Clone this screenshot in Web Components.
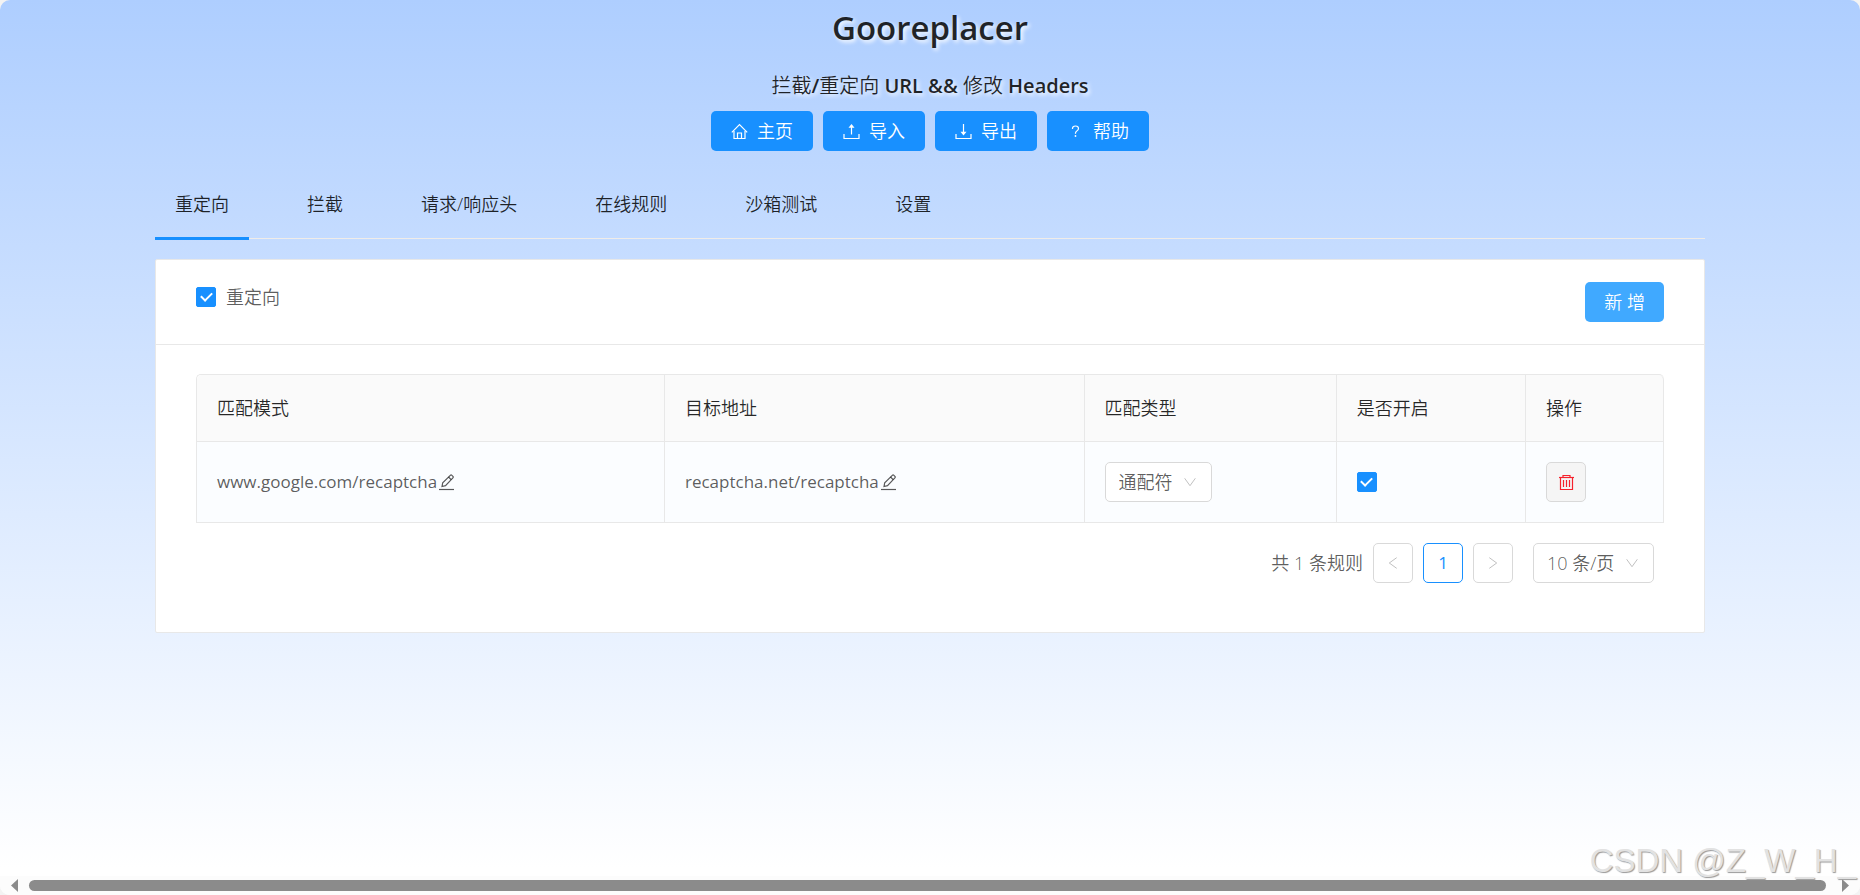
<!DOCTYPE html>
<html lang="zh-CN">
<head>
<meta charset="UTF-8">
<meta name="viewport" content="width=device-width, initial-scale=1">
<title>Gooreplacer</title>
<style>
  :root {
    --primary: #1890ff;
    --primary-hover: #40a9ff;
    --line: #e8e8e8;
    --control-line: #d9d9d9;
    --heading: rgba(0, 0, 0, 0.85);
    --text: rgba(0, 0, 0, 0.65);
  }
  html { background: #f3f3f3; }
  body {
    margin: 0;
    font: 350 17px/26px "Open Sans", "Noto Sans CJK SC", sans-serif;
    color: var(--text);
  }
  b { font-weight: 600; }
</style>
</head>
<body>
<app-shell>
  <app-header heading="Gooreplacer">
    <span slot="subheading">拦截<b>/</b>重定向 <b>URL &amp;&amp;</b> 修改 <b>Headers</b></span>
    <action-button icon="home">主页</action-button>
    <action-button icon="upload">导入</action-button>
    <action-button icon="download">导出</action-button>
    <action-button icon="question">帮助</action-button>
  </app-header>
  <tab-bar tabs="重定向,拦截,请求/响应头,在线规则,沙箱测试,设置" active="0"></tab-bar>
  <rule-card>
    <check-box slot="title" label="重定向"></check-box>
    <action-button slot="extra" class="light">新 增</action-button>
    <rule-table></rule-table>
    <page-nav></page-nav>
  </rule-card>
  <water-mark slot="overlay">CSDN @Z_W_H_</water-mark>
</app-shell>

<script>
const TRAY = '<path d="M1 11v4.500h15V11"/>'

const ICONS = {
  home: '<path d="M.8 9.300L8.500 1.600l7.700 7.700"/><path d="M3 8v7.500h11V8"/><path d="M6.500 15.500V10h4v5.500"/>',
  upload: TRAY + '<path d="M8.500 11.500V3"/><path d="M5.500 4.800L8.500 1l3 3.800z" fill="currentColor" stroke="none"/>',
  download: TRAY + '<path d="M8.500 1v9"/><path d="M5.500 8.700L8.500 12.500l3-3.800z" fill="currentColor" stroke="none"/>',
  question: '<path d="M5.500 6V5.500C5.500 3.800 6.900 3 8.500 3s3 .9 3 2.500c0 2.300-3 2.400-3 4.500v.7"/><circle cx="8.500" cy="13" r=".9" fill="currentColor" stroke="none"/>',
  edit: '<path d="M1 15.500h15"/><path d="M4 12.500l.7-3.600 7.600-7.600c.5-.5 1.100-.5 1.600 0l1 1c.5.500.5 1.100 0 1.600L7.500 11.700z"/><path d="M10.500 3l2.700 2.700"/>',
  trash: '<path d="M1 3.500h15"/><path d="M5 3.500v-2h7v2"/><path d="M2.500 3.500v12h12v-12"/><path d="M5.500 6v7M8.500 6v7M11.500 6v7"/>',
  down: '<path d="M2 4l6.500 9L15 4"/>',
  left: '<path d="M13 2L4 8.500l9 6.500"/>',
  right: '<path d="M4 2l9 6.500L4 15"/>',
}

class BaseElement extends HTMLElement {
  constructor() {
    super()
    this.attachShadow({ mode: 'open' })
  }

  connectedCallback() {
    this.shadowRoot.innerHTML = this.template()
  }
}

/* <ui-icon name> — line icon that takes the text colour */
class UiIcon extends BaseElement {
  template() {
    return `
      <style>
        :host { display: inline-block; width: 17px; height: 17px; flex: none; }
        svg { display: block; width: 100%; height: 100%; fill: none; stroke: currentColor; stroke-width: 1.2; }
      </style>
      <svg viewBox="0 0 17 17" aria-hidden="true">${ICONS[this.getAttribute('name')] || ''}</svg>
    `
  }
}

class AppShell extends BaseElement {
  template() {
    return `
      <style>
        :host {
          position: relative;
          display: flex;
          flex-direction: column;
          min-height: 100vh;
          border-radius: 10px;
          overflow: hidden;
          background: linear-gradient(#aeceff, #ffffff 97%);
        }
        main {
          flex: 1;
          display: flex;
          flex-direction: column;
          width: calc(100% * 5 / 6);
          margin: 0 auto;
        }
      </style>
      <main><slot></slot></main>
      <scroll-track></scroll-track>
      <slot name="overlay"></slot>
    `
  }
}

class ScrollTrack extends BaseElement {
  template() {
    return `
      <style>
        :host {
          display: flex;
          align-items: center;
          gap: 11px;
          height: 19px;
          padding: 0 11px;
          background: #fcfcfc;
          color: #8b8b8b;
        }
        svg { width: 7px; height: 13px; fill: currentColor; }
        .thumb { flex: 1; height: 11px; border-radius: 6px; background: currentColor; }
        svg:last-child { margin-left: 5px; }
      </style>
      <svg viewBox="0 0 7 13" aria-hidden="true"><path d="M7 0v13L0 6.500z"/></svg>
      <div class="thumb"></div>
      <svg viewBox="0 0 7 13" aria-hidden="true"><path d="M0 0v13l7-6.500z"/></svg>
    `
  }
}

class AppHeader extends BaseElement {
  template() {
    return `
      <style>
        :host { display: flex; flex-direction: column; align-items: center; color: var(--heading); }
        h1, h2 { margin: 0; text-shadow: 2px 2px 4px #fff; }
        h1 { font-weight: 600; font-size: 33px; line-height: 56px; }
        h2 { margin-top: 14px; font-weight: inherit; font-size: 20px; line-height: 32px; }
        nav { display: flex; gap: 10px; margin-top: 9px; }
      </style>
      <h1>${this.getAttribute('heading')}</h1>
      <h2><slot name="subheading"></slot></h2>
      <nav><slot></slot></nav>
    `
  }
}

/* <action-button icon> — primary button, text goes in the slot */
class ActionButton extends BaseElement {
  template() {
    const icon = this.getAttribute('icon')
    return `
      <style>
        :host { display: inline-block; }
        button {
          display: flex;
          align-items: center;
          gap: 9px;
          height: 40px;
          padding: 0 19px;
          border: 0;
          border-radius: 5px;
          background: var(--primary);
          color: #fff;
          font: inherit;
          font-size: 18px;
        }
        :host([icon]) button { padding: 0 20px; }
        :host(.light) button { background: var(--primary-hover); }
      </style>
      <button type="button">${icon ? `<ui-icon name="${icon}"></ui-icon>` : ''}<slot></slot></button>
    `
  }
}

class TabBar extends BaseElement {
  template() {
    const active = Number(this.getAttribute('active'))
    const tabs = this.getAttribute('tabs').split(',')
    return `
      <style>
        :host { display: block; margin-top: 24px; }
        div { display: flex; gap: 38px; box-shadow: inset 0 -1px #f0ece8; height: 64px; margin-bottom: 20px; }
        button {
          height: 65px;
          padding: 0 20px 8px;
          border: 0;
          background: none;
          color: var(--heading);
          font: inherit;
          font-size: 18px;
        }
        button[aria-selected="true"] { box-shadow: inset 0 -3px var(--primary); }
      </style>
      <div role="tablist">
        ${tabs.map((t, i) => `<button type="button" role="tab" aria-selected="${i === active}">${t}</button>`).join('')}
      </div>
    `
  }
}

class RuleCard extends BaseElement {
  template() {
    return `
      <style>
        :host { display: block; border: 1px solid var(--line); border-radius: 2px; background: #fff; }
        header {
          display: flex;
          justify-content: space-between;
          align-items: flex-start;
          padding: 22px 40px;
          border-bottom: 1px solid var(--line);
        }
        section { padding: 29px 40px 49px; }
      </style>
      <header><slot name="title"></slot><slot name="extra"></slot></header>
      <section><slot></slot></section>
    `
  }
}

class CheckBox extends BaseElement {
  template() {
    const label = this.getAttribute('label') || ''
    return `
      <style>
        :host { display: block; }
        label { display: flex; align-items: center; gap: 10px; font-size: 18px; line-height: 30px; }
        input {
          appearance: none;
          display: grid;
          place-items: center;
          width: 20px;
          height: 20px;
          margin: 0;
          border: 1px solid var(--control-line);
          border-radius: 2px;
          background: #fff;
        }
        input:checked { border-color: var(--primary); background: var(--primary); }
        input:checked::after {
          content: "";
          width: 5px;
          height: 9px;
          margin-bottom: 3px;
          border: solid #fff;
          border-width: 0 2px 2px 0;
          transform: rotate(45deg);
        }
      </style>
      <label><input type="checkbox" checked aria-label="${label || '是否开启'}">${label}</label>
    `
  }
}

/* <select-box options="a,b" label> — drop-down with its own arrow */
class SelectBox extends BaseElement {
  template() {
    const options = this.getAttribute('options').split(',')
    return `
      <style>
        :host { display: inline-grid; align-items: center; vertical-align: top; }
        select, ui-icon { grid-area: 1 / 1; }
        select {
          appearance: none;
          height: 40px;
          padding: 0 38px 0 13px;
          border: 1px solid var(--control-line);
          border-radius: 5px;
          background: #fff;
          color: var(--text);
          font: inherit;
          font-size: 18px;
        }
        ui-icon {
          justify-self: end;
          width: 14px;
          height: 14px;
          margin-right: 15px;
          color: #bfbfbf;
          pointer-events: none;
        }
      </style>
      <select aria-label="${this.getAttribute('label')}">
        ${options.map((o) => `<option>${o}</option>`).join('')}
      </select>
      <ui-icon name="down"></ui-icon>
    `
  }
}

class RuleTable extends BaseElement {
  template() {
    return `
      <style>
        :host { display: block; }
        table {
          width: 100%;
          table-layout: fixed;
          border-collapse: separate;
          border-spacing: 0;
          border: solid var(--line);
          border-width: 1px 0 0 1px;
          border-radius: 5px 5px 0 0;
        }
        th, td {
          box-sizing: border-box;
          padding: 0 20px;
          border: solid var(--line);
          border-width: 0 1px 1px 0;
          text-align: left;
        }
        th { height: 67px; background: #fafafa; color: var(--heading); font-weight: inherit; font-size: 18px; }
        td { height: 81px; background: #fbfdff; }
        th:first-child { border-top-left-radius: 5px; }
        th:last-child { border-top-right-radius: 5px; }
        .pattern { width: 31.9%; }
        .target { width: 28.6%; }
        .kind { width: 17.2%; }
        .enabled { width: 12.9%; }
        .editable { display: flex; align-items: center; gap: 1px; font-weight: 400; }
        button {
          display: grid;
          place-items: center;
          padding: 0;
          border: 0;
          background: none;
          color: inherit;
        }
        .remove {
          width: 40px;
          height: 40px;
          border: 1px solid var(--control-line);
          border-radius: 5px;
          background: #f5f5f5;
          color: #f5222d;
        }
      </style>
      <table>
        <thead>
          <tr>
            <th class="pattern">匹配模式</th>
            <th class="target">目标地址</th>
            <th class="kind">匹配类型</th>
            <th class="enabled">是否开启</th>
            <th>操作</th>
          </tr>
        </thead>
        <tbody>
          <tr>
            <td><div class="editable">www.google.com/recaptcha<button type="button" aria-label="编辑"><ui-icon name="edit"></ui-icon></button></div></td>
            <td><div class="editable">recaptcha.net/recaptcha<button type="button" aria-label="编辑"><ui-icon name="edit"></ui-icon></button></div></td>
            <td><select-box options="通配符" label="匹配类型"></select-box></td>
            <td><check-box></check-box></td>
            <td><button type="button" class="remove" aria-label="删除"><ui-icon name="trash"></ui-icon></button></td>
          </tr>
        </tbody>
      </table>
    `
  }
}

class PageNav extends BaseElement {
  template() {
    return `
      <style>
        :host { display: flex; justify-content: flex-end; align-items: center; gap: 10px; margin: 20px 10px 0 0; }
        span { font-size: 18px; }
        button {
          display: grid;
          place-items: center;
          width: 40px;
          height: 40px;
          padding: 0;
          border: 1px solid var(--control-line);
          border-radius: 5px;
          background: #fff;
          color: #bfbfbf;
          font: inherit;
        }
        button ui-icon { width: 14px; height: 14px; }
        .current { border-color: var(--primary); color: var(--primary); font-weight: 400; }
        select-box { margin-left: 10px; }
      </style>
      <span>共 1 条规则</span>
      <button type="button" aria-label="上一页" disabled><ui-icon name="left"></ui-icon></button>
      <button type="button" class="current" aria-current="page">1</button>
      <button type="button" aria-label="下一页" disabled><ui-icon name="right"></ui-icon></button>
      <select-box options="10 条/页" label="每页条数"></select-box>
    `
  }
}

class WaterMark extends BaseElement {
  template() {
    return `
      <style>
        :host {
          position: absolute;
          right: 4px;
          bottom: 14px;
          font: 400 33px/40px "Liberation Sans", sans-serif;
          color: #e2e2e2;
          text-shadow: 1px 1px 1px #999;
          pointer-events: none;
        }
      </style>
      <slot></slot>
    `
  }
}

customElements.define('ui-icon', UiIcon)
customElements.define('app-shell', AppShell)
customElements.define('scroll-track', ScrollTrack)
customElements.define('app-header', AppHeader)
customElements.define('action-button', ActionButton)
customElements.define('tab-bar', TabBar)
customElements.define('rule-card', RuleCard)
customElements.define('check-box', CheckBox)
customElements.define('select-box', SelectBox)
customElements.define('rule-table', RuleTable)
customElements.define('page-nav', PageNav)
customElements.define('water-mark', WaterMark)
</script>
</body>
</html>
